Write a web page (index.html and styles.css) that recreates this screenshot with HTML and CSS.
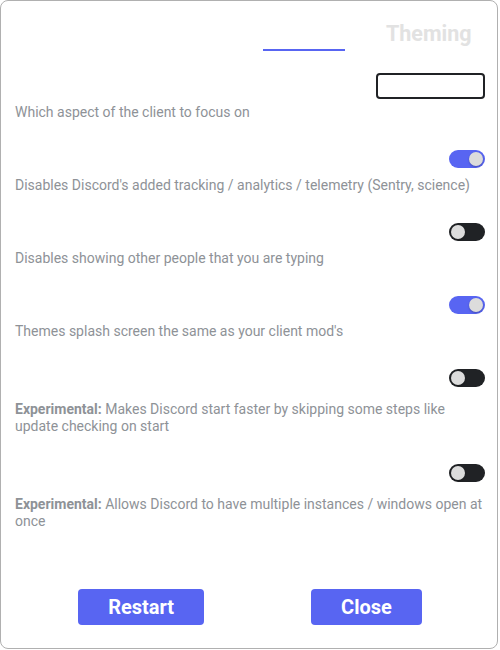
FILE: index.html
```html
<!DOCTYPE html>
<html lang="en">
<head>
<meta charset="utf-8">
<title>Settings</title>
<link rel="stylesheet" href="styles.css">
</head>
<body>
<div class="modal">
  <div class="tabs">
    <div class="tab active"></div>
    <div class="tab">Theming</div>
  </div>
  <div class="settings">
    <div class="setting">
      <div class="head"><div class="select"></div></div>
      <div class="desc">Which aspect of the client to focus on</div>
    </div>
    <div class="setting">
      <div class="head"><div class="toggle on"><span class="knob"></span></div></div>
      <div class="desc">Disables Discord's added tracking / analytics / telemetry (Sentry, science)</div>
    </div>
    <div class="setting">
      <div class="head"><div class="toggle"><span class="knob"></span></div></div>
      <div class="desc">Disables showing other people that you are typing</div>
    </div>
    <div class="setting">
      <div class="head"><div class="toggle on"><span class="knob"></span></div></div>
      <div class="desc">Themes splash screen the same as your client mod's</div>
    </div>
    <div class="setting">
      <div class="head"><div class="toggle"><span class="knob"></span></div></div>
      <div class="desc note"><b>Experimental:</b> Makes Discord start faster by skipping some steps like update checking on start</div>
    </div>
    <div class="setting">
      <div class="head"><div class="toggle"><span class="knob"></span></div></div>
      <div class="desc note"><b>Experimental:</b> Allows Discord to have multiple instances / windows open at once</div>
    </div>
  </div>
  <div class="footer">
    <button class="btn">Restart</button>
    <button class="btn">Close</button>
  </div>
</div>
</body>
</html>
```
FILE: styles.css
```css
html, body {
  margin: 0;
  padding: 0;
  background: #ffffff;
}

body {
  font-family: Roboto, "Liberation Sans", sans-serif;
}

.modal {
  box-sizing: border-box;
  width: 498px;
  height: 649px;
  border: 1px solid #b0b0b0;
  border-radius: 8px;
  background: #ffffff;
  display: flex;
  flex-direction: column;
}

.tabs {
  display: flex;
  gap: 41px;
  padding: 21px 0 0 262px;
}

.tab {
  font-size: 21.5px;
  font-weight: 700;
  line-height: 24px;
  color: #e2e2e2;
  padding-bottom: 3px;
  border-bottom: 2px solid transparent;
}

.tab.active {
  width: 82px;
  border-bottom-color: #5865f2;
}

.settings {
  padding: 22px 12px 0 14px;
  display: flex;
  flex-direction: column;
  gap: 26px;
}

.head {
  height: 26px;
  display: flex;
  align-items: center;
  justify-content: flex-end;
}

.select {
  box-sizing: border-box;
  width: 109px;
  height: 26px;
  border: 2px solid #202225;
  border-radius: 4px;
  background: #fff;
}

.toggle {
  position: relative;
  width: 36px;
  height: 18px;
  border-radius: 9px;
  background: #202225;
}

.toggle.on {
  background: #5865f2;
}

.knob {
  position: absolute;
  top: 2px;
  left: 2px;
  width: 14px;
  height: 14px;
  border-radius: 50%;
  background: #dcdcdc;
  box-shadow: 0 1px 2px rgba(0, 0, 0, 0.25);
}

.toggle.on .knob {
  left: 20px;
}

.desc {
  margin-top: 5px;
  font-size: 14px;
  line-height: 16px;
  color: #8e9297;
}

.desc.note {
  margin-top: 10px;
  line-height: 16.5px;
}

.desc b {
  font-weight: 700;
}

.footer {
  margin-top: auto;
  padding: 0 0 23px 2px;
  display: flex;
  justify-content: center;
  gap: 107px;
}

.btn {
  height: 36px;
  padding: 0 30px;
  border: none;
  border-radius: 4px;
  background: #5865f2;
  color: #ffffff;
  font-family: Roboto, "Liberation Sans", sans-serif;
  font-size: 20px;
  font-weight: 700;
  cursor: pointer;
}
```
